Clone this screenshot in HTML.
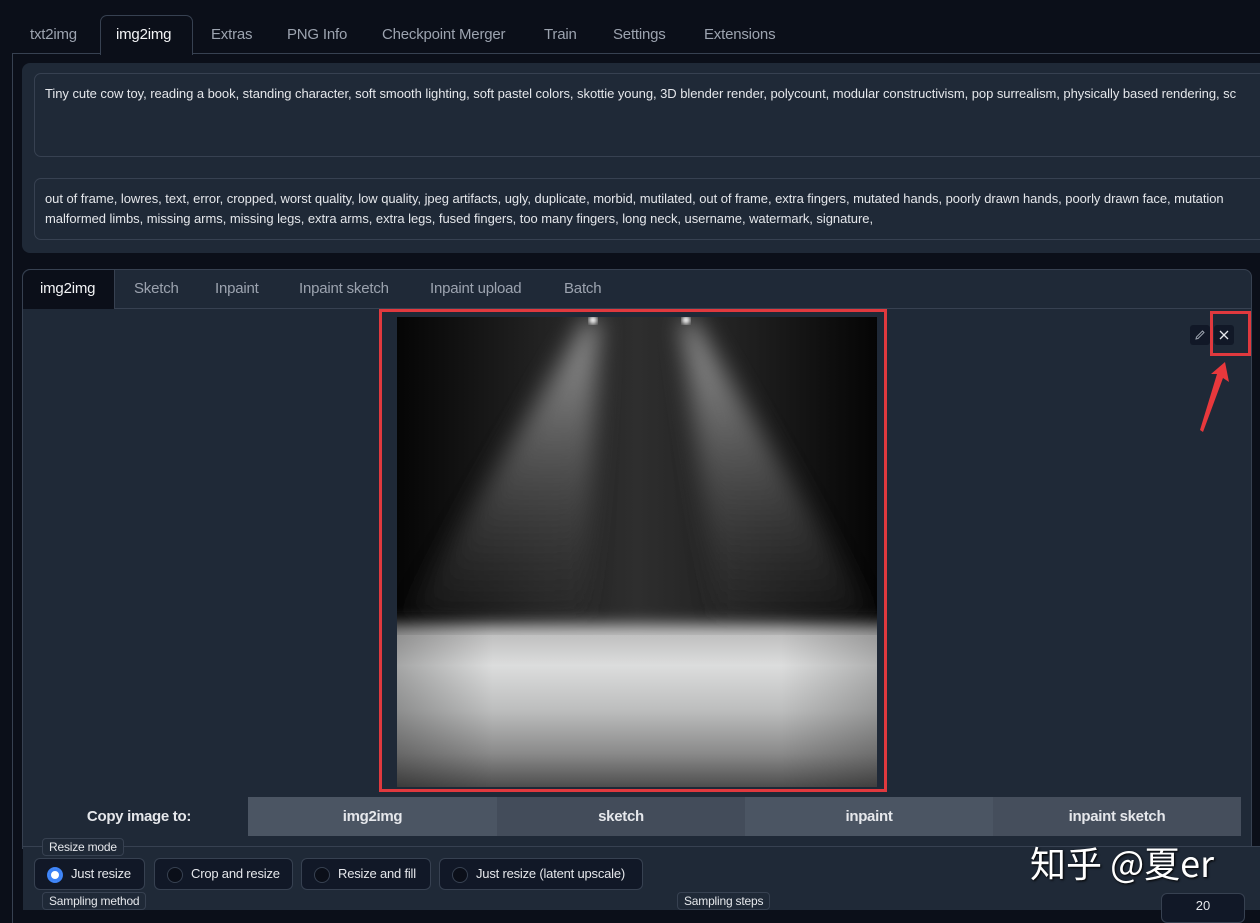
<!DOCTYPE html>
<html><head><meta charset="utf-8"><style>
*{box-sizing:border-box;margin:0;padding:0}
body{width:1260px;height:910px;overflow:hidden;background:#0b0f19;font-family:"Liberation Sans","Noto Sans CJK SC",sans-serif;color:#d1d5db;position:relative;font-size:14px}
.abs{position:absolute}
.tab{position:absolute;top:26px;font-size:15px;color:#9ca3af;letter-spacing:-0.2px}
.ta{position:absolute;background:#1f2937;border:1px solid #374151;border-radius:7px;font-size:13px;color:#e5e7eb;padding:10px;line-height:20px;white-space:nowrap;overflow:hidden;letter-spacing:-0.05px}
.st{position:absolute;top:280px;font-size:15px;color:#9ca3af;letter-spacing:-0.2px}
.btn{position:absolute;top:797px;height:39px;font-weight:bold;font-size:15px;color:#e5e7eb;text-align:center;line-height:39px;letter-spacing:-0.3px}
.radio{position:absolute;top:858px;height:32px;border:1px solid #374151;border-radius:6px;background:#111827;font-size:13px;color:#e5e7eb;line-height:30px;padding-left:36px;letter-spacing:-0.2px}
.radio:before{content:"";position:absolute;left:12px;top:8px;width:14px;height:14px;border-radius:50%;border:1px solid #374151;background:#0b0f19}
.radio.on:before{background:#3b82f6;border-color:#3b82f6;box-shadow:inset 0 0 0 3px #3b82f6, inset 0 0 0 7px #fff}
.lbl{position:absolute;background:#1f2937;border:1px solid #374151;border-radius:4px;font-size:12px;color:#e5e7eb;padding:0 6px;height:18px;line-height:17px;letter-spacing:-0.2px}
</style></head><body>
<div class="abs" style="left:12px;top:53px;width:1260px;height:870px;border:1px solid #374151;border-right:none;border-bottom:none"></div>
<div class="abs" style="left:100px;top:15px;width:93px;height:40px;border:1px solid #374151;border-bottom:none;border-radius:7px 7px 0 0;background:#0b0f19"></div>
<div class="tab" style="left:30px">txt2img</div>
<div class="tab" style="left:116px;color:#f3f4f6">img2img</div>
<div class="tab" style="left:211px">Extras</div>
<div class="tab" style="left:287px">PNG Info</div>
<div class="tab" style="left:382px">Checkpoint Merger</div>
<div class="tab" style="left:544px">Train</div>
<div class="tab" style="left:613px">Settings</div>
<div class="tab" style="left:704px">Extensions</div>
<div class="abs" style="left:22px;top:63px;width:1250px;height:190px;background:#1f2937;border-radius:8px"></div>
<div class="ta" style="left:34px;top:73px;width:1240px;height:84px">Tiny cute cow toy, reading a book, standing character, soft smooth lighting, soft pastel colors, skottie young, 3D blender render, polycount, modular constructivism, pop surrealism, physically based rendering, sc</div>
<div class="ta" style="left:34px;top:178px;width:1240px;height:62px">out of frame, lowres, text, error, cropped, worst quality, low quality, jpeg artifacts, ugly, duplicate, morbid, mutilated, out of frame, extra fingers, mutated hands, poorly drawn hands, poorly drawn face, mutation<br>malformed limbs, missing arms, missing legs, extra arms, extra legs, fused fingers, too many fingers, long neck, username, watermark, signature,</div>
<div class="abs" style="left:22px;top:269px;width:1230px;height:580px;background:#1f2937;border:1px solid #374151;border-radius:8px 8px 0 0"></div>
<div class="abs" style="left:23px;top:308px;width:1228px;height:1px;background:#374151"></div>
<div class="abs" style="left:23px;top:270px;width:92px;height:39px;background:#0b0f19;border-right:1px solid #374151;border-radius:8px 0 0 0"></div>
<div class="st" style="left:40px;color:#f3f4f6">img2img</div>
<div class="st" style="left:134px">Sketch</div>
<div class="st" style="left:215px">Inpaint</div>
<div class="st" style="left:299px">Inpaint sketch</div>
<div class="st" style="left:430px">Inpaint upload</div>
<div class="st" style="left:564px">Batch</div>
<svg class="abs" style="left:397px;top:317px" width="480" height="470" viewBox="0 0 480 470">
<defs>
<filter id="b" x="-50%" y="-50%" width="200%" height="200%"><feGaussianBlur stdDeviation="12"/></filter>
<filter id="b3" x="-20%" y="-50%" width="140%" height="200%"><feGaussianBlur stdDeviation="8"/></filter>
<filter id="b2"><feGaussianBlur stdDeviation="2"/></filter>
<linearGradient id="bg" x1="0" x2="1"><stop offset="0" stop-color="#050505"/><stop offset=".3" stop-color="#222"/><stop offset=".5" stop-color="#2e2e2e"/><stop offset=".7" stop-color="#222"/><stop offset="1" stop-color="#050505"/></linearGradient>
<linearGradient id="c" x1="0" y1="0" x2="0" y2="1"><stop offset="0" stop-color="#aaa"/><stop offset=".4" stop-color="#666"/><stop offset="1" stop-color="#333" stop-opacity=".3"/></linearGradient>
<linearGradient id="fv" x1="0" y1="0" x2="0" y2="1"><stop offset="0" stop-color="#c0c0c0"/><stop offset=".2" stop-color="#dcdddd"/><stop offset=".5" stop-color="#bcbdbd"/><stop offset=".78" stop-color="#8a8a8a"/><stop offset="1" stop-color="#4e4e4e"/></linearGradient>
<linearGradient id="fh" x1="0" x2="1"><stop offset="0" stop-color="#000" stop-opacity=".25"/><stop offset=".2" stop-color="#000" stop-opacity="0"/><stop offset=".8" stop-color="#000" stop-opacity="0"/><stop offset="1" stop-color="#000" stop-opacity=".2"/></linearGradient>
</defs>
<rect width="480" height="470" fill="url(#bg)"/>
<polygon points="190,2 202,2 190,300 10,300" fill="url(#c)" filter="url(#b)" opacity=".85"/>
<polygon points="284,2 296,2 475,300 320,300" fill="url(#c)" filter="url(#b)" opacity=".85"/>
<rect x="-20" y="308" width="520" height="40" fill="#c4c4c4" filter="url(#b3)"/>
<rect x="0" y="318" width="480" height="152" fill="url(#fv)"/>
<rect x="0" y="295" width="480" height="175" fill="url(#fh)"/>
<circle cx="196" cy="3" r="4" fill="#fff" filter="url(#b2)"/>
<circle cx="289" cy="3" r="4" fill="#fff" filter="url(#b2)"/>
</svg>
<div class="abs" style="left:379px;top:309px;width:508px;height:483px;border:3px solid #e0393e"></div>
<div class="abs" style="left:1190px;top:325px;width:20px;height:20px;background:#111827;border-radius:3px"></div>
<svg class="abs" style="left:1193px;top:328px" width="14" height="14" viewBox="0 0 14 14"><path d="M3 11 L3.5 9 L9.5 3 L11 4.5 L5 10.5 Z" fill="none" stroke="#9ca3af" stroke-width="1"/></svg>
<div class="abs" style="left:1214px;top:325px;width:20px;height:20px;background:#111827;border-radius:3px"></div>
<svg class="abs" style="left:1217px;top:328px" width="14" height="14" viewBox="0 0 14 14"><path d="M3 3 L11 11 M11 3 L3 11" stroke="#e5e7eb" stroke-width="1.3"/></svg>
<div class="abs" style="left:1210px;top:311px;width:41px;height:45px;border:3px solid #e0393e"></div>
<svg class="abs" style="left:1195px;top:360px" width="40" height="80"><polygon points="30,2 34,22 28,18 8,72 5,70 22,14 16,14" fill="#e8383c"/></svg>
<div class="abs" style="left:30px;top:797px;width:218px;height:39px;line-height:39px;text-align:center;font-weight:bold;font-size:15px;color:#e5e7eb;letter-spacing:-0.3px">Copy image to:</div>
<div class="btn" style="left:248px;width:249px;background:#4b5563">img2img</div>
<div class="btn" style="left:497px;width:248px;background:#434c5a">sketch</div>
<div class="btn" style="left:745px;width:248px;background:#4b5563">inpaint</div>
<div class="btn" style="left:993px;width:248px;background:#454e5c">inpaint sketch</div>
<div class="abs" style="left:23px;top:846px;width:1237px;height:64px;background:#1f2937"></div>
<div class="abs" style="left:23px;top:846px;width:1237px;height:1px;background:#374151"></div>
<div class="lbl" style="left:42px;top:838px">Resize mode</div>
<div class="radio on" style="left:34px;width:111px">Just resize</div>
<div class="radio" style="left:154px;width:139px">Crop and resize</div>
<div class="radio" style="left:301px;width:130px">Resize and fill</div>
<div class="radio" style="left:439px;width:204px">Just resize (latent upscale)</div>
<div class="lbl" style="left:42px;top:892px">Sampling method</div>
<div class="lbl" style="left:677px;top:892px">Sampling steps</div>
<div class="abs" style="left:1161px;top:893px;width:84px;height:30px;border:1px solid #374151;border-radius:6px;background:#111827;text-align:center;font-size:13px;line-height:24px;color:#e5e7eb">20</div>
<div class="abs" style="left:1030px;top:836px;font-size:36px;color:#fff;font-family:'Noto Sans CJK SC',sans-serif;text-shadow:1px 1px 2px #000;white-space:nowrap">知乎 @夏er</div>
</body></html>
